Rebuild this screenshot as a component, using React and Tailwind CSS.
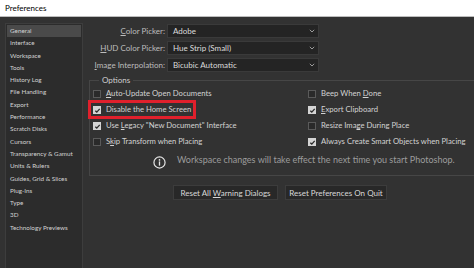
import React from 'react';

const SIDEBAR = [
    'General', 'Interface', 'Workspace', 'Tools', 'History Log', 'File Handling', 'Export',
    'Performance', 'Scratch Disks', 'Cursors', 'Transparency & Gamut', 'Units & Rulers',
    'Guides, Grid & Slices', 'Plug-Ins', 'Type', '3D', 'Technology Previews',
];

const SELECTS = [
    { label: 'olor Picker:', key: 'C', value: 'Adobe' },
    { label: 'UD Color Picker:', key: 'H', value: 'Hue Strip (Small)' },
    { label: 'mage Interpolation:', key: 'I', value: 'Bicubic Automatic' },
];

const LEFT_OPTS = [
    { text: <><u>A</u>uto-Update Open Documents</>, checked: false },
    { text: <>Disable the Home Screen</>, checked: true, highlight: true },
    { text: <>Use <u>L</u>egacy "New Document" Interface</>, checked: true },
    { text: <>S<u>k</u>ip Transform when Placing</>, checked: false },
];

const RIGHT_OPTS = [
    { text: <>Beep When <u>D</u>one</>, checked: false },
    { text: <><u>E</u>xport Clipboard</>, checked: true },
    { text: <>Resize Ima<u>g</u>e During Place</>, checked: false },
    { text: <>Always Create Smart Objects when Placing</>, checked: true },
];

function Check({ checked }) {
    if (!checked) {
        return <span className="w-[8px] h-[8px] border border-[#5a5a5a] bg-[#2a2a2a] shrink-0" />;
    }
    return (
        <span className="w-[8px] h-[8px] bg-[#d4d4d4] shrink-0 flex items-center justify-center">
            <svg width="7" height="7" viewBox="0 0 8 8">
                <path d="M1.5 4.2 L3.2 5.8 L6.5 2.2" stroke="#2a2a2a" strokeWidth="1.5" fill="none" />
            </svg>
        </span>
    );
}

function Option({ opt }) {
    return (
        <div className="relative h-[16px] flex items-center gap-[5px]">
            <Check checked={opt.checked} />
            <span className="whitespace-nowrap">{opt.text}</span>
            {opt.highlight && (
                <div className="absolute left-[-5px] top-[-2px] w-[108px] h-[19px] border-[3px] border-[#e0202c]" />
            )}
        </div>
    );
}

export default function App() {
    return (
        <div className="w-[474px] h-[268px] overflow-hidden bg-[#323232] text-[#d2d2d2]" style={{ fontFamily: 'Lato, "Open Sans", sans-serif' }}>
            <div className="h-[17px] bg-white flex items-center pl-[5px] text-[8px] text-black border-b border-[#bdbdbd]">
                Preferences
            </div>
            <div className="flex h-[251px]">
                <div className="ml-[5px] mt-[6px] w-[78px] bg-[#2c2c2c] border border-[#3d3d3d] border-b-0 pt-[1px] px-[1px]">
                    {SIDEBAR.map((s, i) => (
                        <div key={s} className={`h-[12.3px] flex items-center pl-[3px] text-[6.3px] leading-none whitespace-nowrap ${i === 0 ? 'bg-[#4a4a4a]' : ''}`}>
                            {s}
                        </div>
                    ))}
                </div>
                <div className="flex-1 pl-[3px] text-[8px] leading-none">
                    <div className="pt-[7px] flex flex-col gap-[3px]">
                        {SELECTS.map(s => (
                            <div key={s.value} className="flex items-center h-[14px]">
                                <div className="w-[81px] text-right pr-[2px] text-[#bdbdbd] whitespace-nowrap">
                                    <u>{s.key}</u>{s.label}
                                </div>
                                <div className="w-[152px] h-[14px] bg-[#242424] border border-[#3a3a3a] flex items-center justify-between pl-[5px] pr-[3px] text-[#dcdcdc]">
                                    <span>{s.value}</span>
                                    <svg width="6" height="4" viewBox="0 0 6 4">
                                        <path d="M0.8 0.8 L3 3 L5.2 0.8" stroke="#9a9a9a" strokeWidth="1" fill="none" />
                                    </svg>
                                </div>
                            </div>
                        ))}
                    </div>
                    <fieldset className="mt-[4px] ml-[3px] mr-[-10px] border border-[#464646] pl-[3px] pt-[2px] h-[100px]">
                        <legend className="ml-[6px] px-[3px] text-[#cfcfcf]">Options</legend>
                        <div className="flex text-[7.7px]">
                            <div className="w-[215px] flex flex-col">
                                {LEFT_OPTS.map((o, i) => <Option key={i} opt={o} />)}
                            </div>
                            <div className="flex flex-col">
                                {RIGHT_OPTS.map((o, i) => <Option key={i} opt={o} />)}
                            </div>
                        </div>
                        <div className="flex items-start mt-[5px] ml-[60px] gap-[11px]">
                            <svg width="13" height="13" viewBox="0 0 14 14" className="mt-[1px]">
                                <circle cx="7" cy="7" r="6" stroke="#e6e6e6" strokeWidth="1.3" fill="none" />
                                <circle cx="7" cy="4.2" r="0.9" fill="#e6e6e6" />
                                <rect x="6.3" y="5.8" width="1.4" height="4.6" fill="#e6e6e6" />
                            </svg>
                            <span className="text-[#9c9c9c] text-[9px] whitespace-nowrap">
                                Workspace changes will take effect the next time you start Photoshop.
                            </span>
                        </div>
                    </fieldset>
                    <div className="flex gap-[7px] mt-[9px] ml-[87px]">
                        <button className="w-[105px] h-[15px] bg-[#282828] border border-[#3c3c3c] text-[#d8d8d8] text-[8px]">
                            Reset All <u>W</u>arning Dialogs
                        </button>
                        <button className="w-[102px] h-[15px] bg-[#282828] border border-[#3c3c3c] text-[#d8d8d8] text-[8px]">
                            Reset Preferences On Quit
                        </button>
                    </div>
                </div>
            </div>
        </div>
    );
}
